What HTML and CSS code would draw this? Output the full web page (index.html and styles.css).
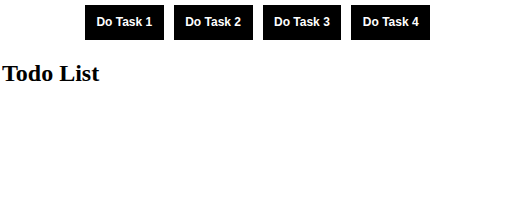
FILE: index.html
```html
<!DOCTYPE html>
<html lang="en">
<head>
  <meta charset="UTF-8" />
  <title>Todo List</title>
  <link rel="stylesheet" href="styles.css">
</head>
<body>

  <!-- Task buttons -->
  <div class="task-bar">
    <button class="task-btn">Do Task 1</button>
    <button class="task-btn">Do Task 2</button>
    <button class="task-btn">Do Task 3</button>
    <button class="task-btn">Do Task 4</button>
  </div>

  <h2 class="todo-title">Todo List</h2>
  <ul class="todo-list"></ul>

</body>
</html>
```

FILE: styles.css
```css
body {
  margin: 0;
  padding: 0;
  background: #fff;
  font-family: 'Liberation Serif', 'Times New Roman', serif;
}

.task-bar {
  display: flex;
  justify-content: center;
  padding-top: 5px;
}

.task-btn {
  margin-left: 10px;
  padding: 0 11.5px;
  height: 35px;
  background: #000;
  color: #fff;
  border: none;
  font-family: 'Liberation Sans', Arial, sans-serif;
  font-size: 12px;
  font-weight: bold;
  line-height: 15px;
  cursor: pointer;
}

.todo-title {
  margin: 20px 0;
  padding-left: 2px;
  font-size: 24px;
  font-weight: bold;
  color: #000;
}

.todo-list {
  margin: 0;
  padding: 0;
  list-style: none;
}
```
